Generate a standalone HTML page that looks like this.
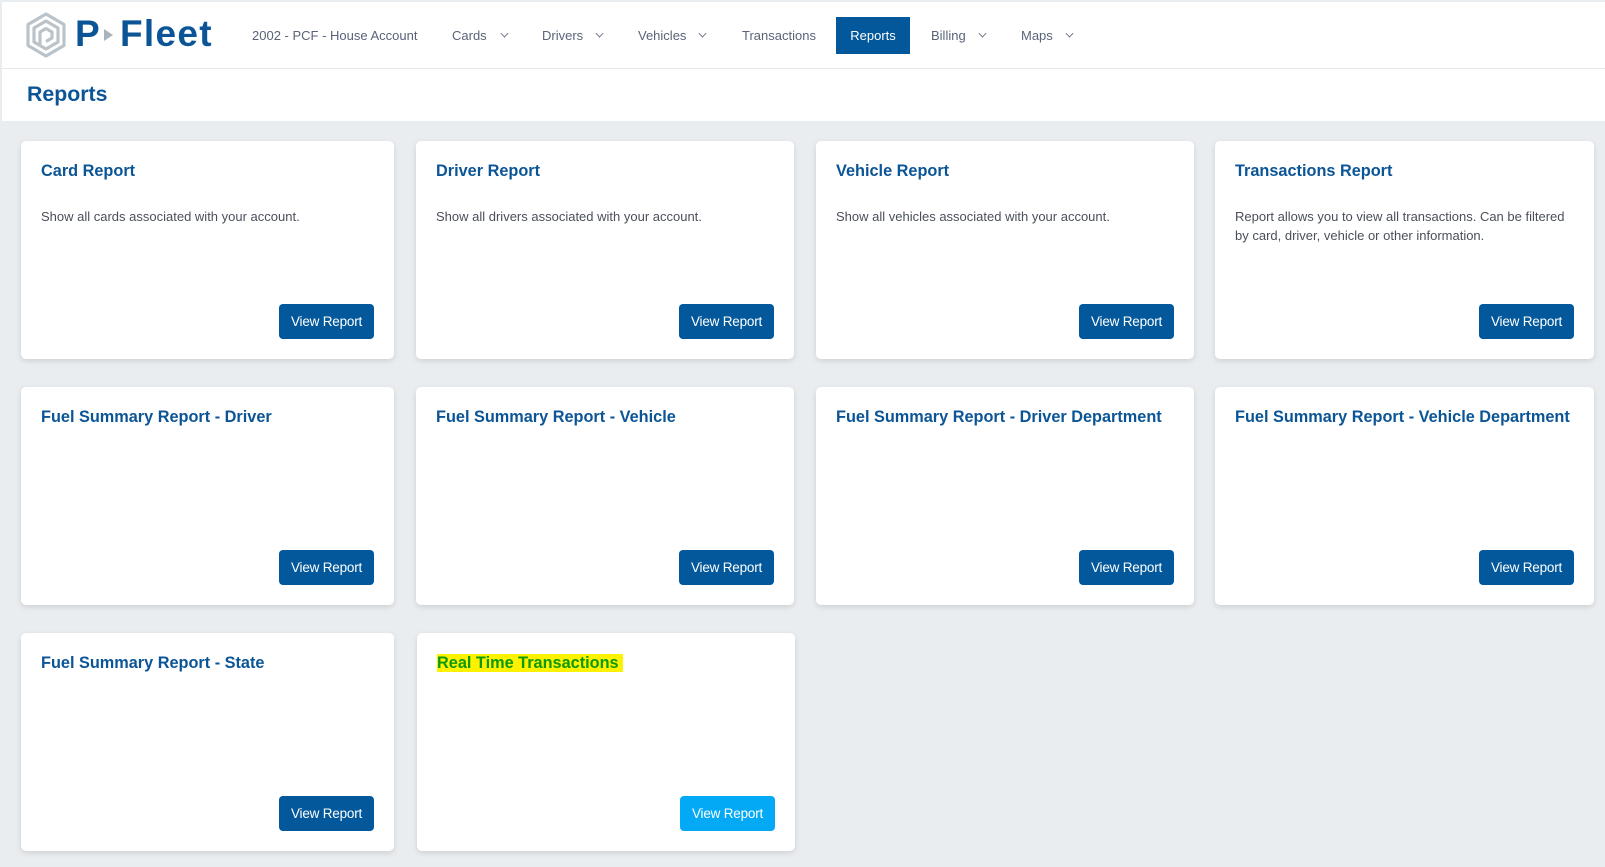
<!DOCTYPE html>
<html><head><meta charset="utf-8">
<style>
*{margin:0;padding:0;box-sizing:border-box}
html,body{width:1605px;height:867px;overflow:hidden}
body{background:#e9edf0;font-family:"Liberation Sans",Arial,sans-serif;position:relative}
.top{position:absolute;left:2px;top:2px;right:0;height:67px;background:#fff;border-bottom:1px solid #e6e9ec}
.strip{position:absolute;left:2px;top:69px;right:0;height:52px;background:#fff}
.strip h1{position:absolute;left:25px;top:13px;font-size:21.3px;font-weight:bold;color:#0b5596}
.logo{position:absolute;left:0;top:0}
.brand{position:absolute;top:11px;font-size:37px;font-weight:bold;color:#0b5596;letter-spacing:1.3px}
.nav{position:absolute;top:26px;font-size:13px;color:#5a6378;white-space:nowrap}
.chev{position:absolute;top:28px;width:7px;height:7px;border-right:1.3px solid #5a6378;border-bottom:1.3px solid #5a6378;transform:rotate(45deg) scale(.8)}
.active{position:absolute;left:834px;width:74px;height:37px;background:#02589b;color:#fff;font-size:13px;text-align:center;line-height:37px}
.card{position:absolute;background:#fff;border-radius:5px;box-shadow:0 2px 6px rgba(0,0,0,.12);height:218px}
.card h2{position:absolute;left:20px;top:21px;font-size:16.3px;font-weight:bold;color:#0b5596;white-space:nowrap}
.card p{position:absolute;left:20px;top:66px;right:20px;font-size:13px;line-height:19px;color:#4a4f5a}
.btn{position:absolute;right:20px;bottom:20px;width:95px;height:35px;background:#02589b;color:#fff;border-radius:4px;font-size:13.5px;text-align:center;line-height:35px;letter-spacing:-.2px}
.hl{background:#fff200;color:#0a9a0a}
</style></head><body>
<div class="top">
<svg class="logo" width="70" height="66" viewBox="0 0 70 66">
<g fill="none" stroke="#b9c3c9" stroke-width="3.2" stroke-linejoin="round">
<polygon points="44,12 62,22.5 62,43.5 44,54 26,43.5 26,22.5"/>
<polygon points="44,19 56,26 56,40 44,47 32,40 32,26"/>
<path d="M38,42 V30 L44,26.5 L50,30 V36 L44,39.5"/>
</g>
</svg>
<div class="brand" style="left:73px">P</div>
<svg style="position:absolute;left:102px;top:27px" width="10" height="12"><polygon points="0,0 9,6 0,12" fill="#a9b4bc"/></svg>
<div class="brand" style="left:118px">Fleet</div>
<div class="nav" style="left:250px">2002 - PCF - House Account</div>
<div class="nav" style="left:450px">Cards</div><div class="chev" style="left:499px"></div>
<div class="nav" style="left:540px">Drivers</div><div class="chev" style="left:594px"></div>
<div class="nav" style="left:636px">Vehicles</div><div class="chev" style="left:697px"></div>
<div class="nav" style="left:740px">Transactions</div>
<div class="active" style="top:15px">Reports</div>
<div class="nav" style="left:929px">Billing</div><div class="chev" style="left:977px"></div>
<div class="nav" style="left:1019px">Maps</div><div class="chev" style="left:1064px"></div>
</div>
<div class="strip"><h1>Reports</h1></div>

<div class="card" style="left:21px;top:141px;width:373px"><h2>Card Report</h2><p>Show all cards associated with your account.</p><div class="btn">View Report</div></div>
<div class="card" style="left:416px;top:141px;width:378px"><h2>Driver Report</h2><p>Show all drivers associated with your account.</p><div class="btn">View Report</div></div>
<div class="card" style="left:816px;top:141px;width:378px"><h2>Vehicle Report</h2><p>Show all vehicles associated with your account.</p><div class="btn">View Report</div></div>
<div class="card" style="left:1215px;top:141px;width:379px"><h2>Transactions Report</h2><p>Report allows you to view all transactions. Can be filtered by card, driver, vehicle or other information.</p><div class="btn">View Report</div></div>

<div class="card" style="left:21px;top:387px;width:373px"><h2>Fuel Summary Report - Driver</h2><div class="btn">View Report</div></div>
<div class="card" style="left:416px;top:387px;width:378px"><h2>Fuel Summary Report - Vehicle</h2><div class="btn">View Report</div></div>
<div class="card" style="left:816px;top:387px;width:378px"><h2>Fuel Summary Report - Driver Department</h2><div class="btn">View Report</div></div>
<div class="card" style="left:1215px;top:387px;width:379px"><h2>Fuel Summary Report - Vehicle Department</h2><div class="btn">View Report</div></div>

<div class="card" style="left:21px;top:633px;width:373px"><h2>Fuel Summary Report - State</h2><div class="btn">View Report</div></div>
<div class="card" style="left:417px;top:633px;width:378px"><h2 style="left:20px"><span class="hl">Real Time Transactions&nbsp;</span></h2><div class="btn" style="background:#03a9f4">View Report</div></div>
</body></html>
